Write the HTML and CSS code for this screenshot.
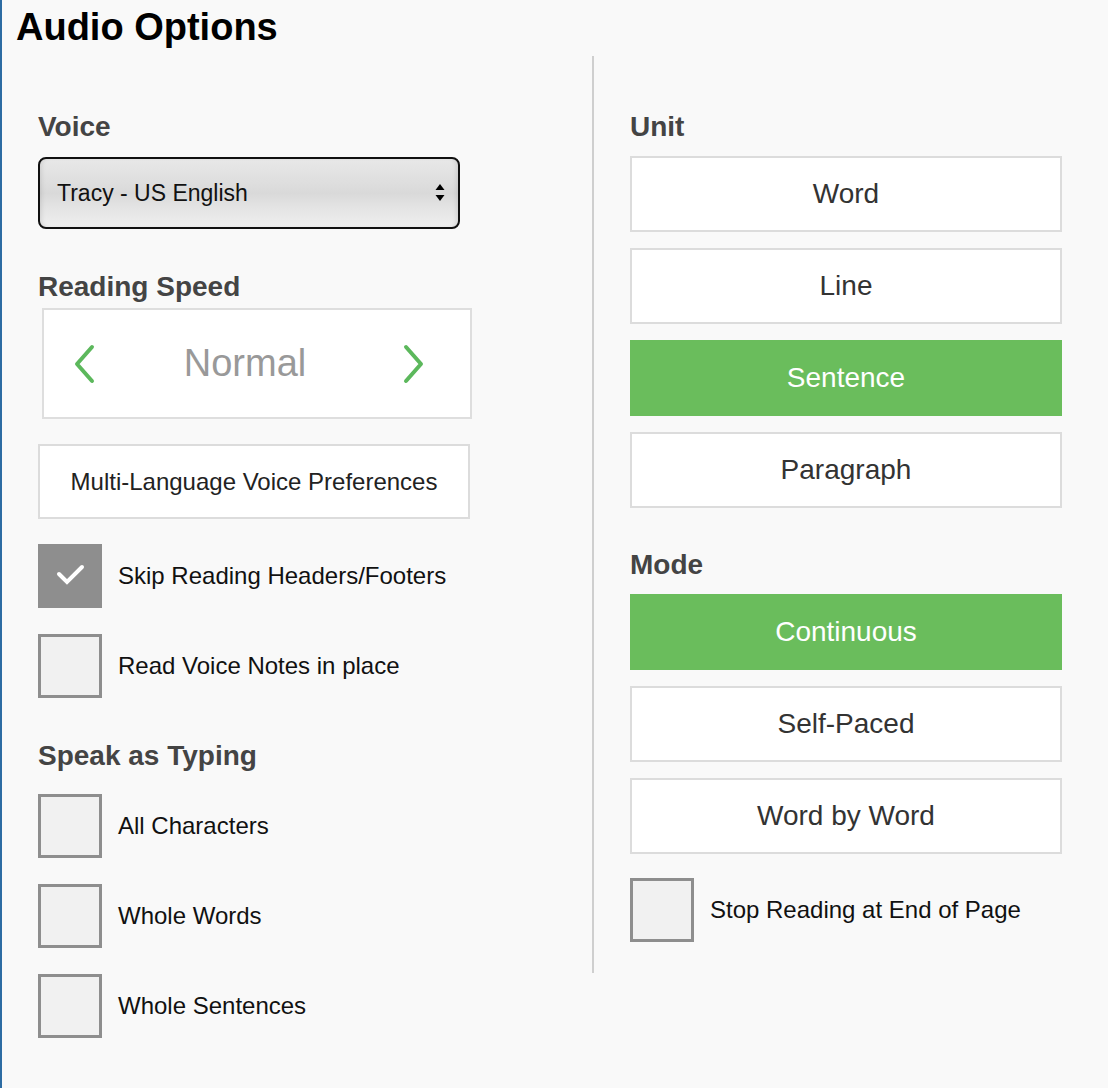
FILE: index.html
```html
<!DOCTYPE html>
<html lang="en">
<head>
<meta charset="utf-8">
<title>Audio Options</title>
<link rel="stylesheet" href="styles.css">
</head>
<body>
<div class="app">
  <h1 class="title">Audio Options</h1>
  <div class="columns">
    <div class="col-left">
      <div class="label">Voice</div>
      <div class="select">
        <span class="select-text">Tracy - US English</span>
        <svg class="select-arrows" width="12" height="22" viewBox="0 0 12 22">
          <polygon points="6,1 10.5,7 1.5,7" fill="#000"/>
          <polygon points="1.5,12 10.5,12 6,18" fill="#000"/>
        </svg>
      </div>

      <div class="label label-gap">Reading Speed</div>
      <div class="speed">
        <svg class="chev chev-left" width="24" height="42" viewBox="0 0 24 42">
          <polyline points="19,4 4,21 19,38" fill="none" stroke="#5cb85c" stroke-width="4" stroke-linecap="round" stroke-linejoin="round"/>
        </svg>
        <span class="speed-text">Normal</span>
        <svg class="chev chev-right" width="24" height="42" viewBox="0 0 24 42">
          <polyline points="5,4 20,21 5,38" fill="none" stroke="#5cb85c" stroke-width="4" stroke-linecap="round" stroke-linejoin="round"/>
        </svg>
      </div>

      <div class="btn btn-ml">Multi-Language Voice Preferences</div>

      <div class="check-list check-list-first">
        <div class="check-row">
          <span class="box box-on">
            <svg width="64" height="64" viewBox="0 0 64 64">
              <polyline points="21,30 29,38 44,23" fill="none" stroke="#fff" stroke-width="4" stroke-linecap="round" stroke-linejoin="miter"/>
            </svg>
          </span>
          <span class="check-label">Skip Reading Headers/Footers</span>
        </div>
        <div class="check-row">
          <span class="box"></span>
          <span class="check-label">Read Voice Notes in place</span>
        </div>
      </div>

      <div class="label label-gap">Speak as Typing</div>
      <div class="check-list check-list-typing">
        <div class="check-row">
          <span class="box"></span>
          <span class="check-label">All Characters</span>
        </div>
        <div class="check-row">
          <span class="box"></span>
          <span class="check-label">Whole Words</span>
        </div>
        <div class="check-row">
          <span class="box"></span>
          <span class="check-label">Whole Sentences</span>
        </div>
      </div>
    </div>

    <div class="col-right">
      <div class="label">Unit</div>
      <div class="btn-list">
        <div class="btn">Word</div>
        <div class="btn">Line</div>
        <div class="btn btn-active">Sentence</div>
        <div class="btn">Paragraph</div>
      </div>

      <div class="label label-gap-mode">Mode</div>
      <div class="btn-list">
        <div class="btn btn-active">Continuous</div>
        <div class="btn">Self-Paced</div>
        <div class="btn">Word by Word</div>
      </div>

      <div class="check-list check-list-stop">
        <div class="check-row">
          <span class="box"></span>
          <span class="check-label">Stop Reading at End of Page</span>
        </div>
      </div>
    </div>
  </div>
</div>
</body>
</html>
```

FILE: styles.css
```css
* {
  box-sizing: border-box;
}

html, body {
  margin: 0;
  padding: 0;
  background: #f9f9f9;
}

body {
  font-family: "Liberation Sans", Arial, Helvetica, sans-serif;
  color: #111;
}

.app {
  min-height: 1088px;
  border-left: 2px solid #2d6ca3;
  padding: 6px 0 0 14px;
}

.title {
  margin: 0;
  font-size: 38px;
  line-height: 42px;
  font-weight: bold;
  color: #000;
}

.columns {
  display: flex;
  align-items: flex-start;
  margin-top: 8px;
}

.col-left {
  width: 434px;
  margin-left: 22px;
  padding-top: 55px;
}

.col-right {
  width: 470px;
  margin-left: 120px;
  border-left: 2px solid #cfcfcf;
  padding: 55px 0 31px 36px;
}

.label {
  font-size: 28px;
  line-height: 32px;
  font-weight: bold;
  color: #444;
}

.label-gap {
  margin-top: 42px;
}

.label-gap-mode {
  margin-top: 41px;
}

/* select */
.select {
  margin-top: 14px;
  width: 422px;
  height: 72px;
  border: 2px solid #111;
  border-radius: 8px;
  background: linear-gradient(#e8e8e8 0%, #dedede 35%, #d9d9d9 50%, #e3e3e3 70%, #efefef 100%);
  box-shadow: inset 4px 0 5px -3px rgba(0,0,0,0.12), inset -4px 0 5px -3px rgba(0,0,0,0.12);
  display: flex;
  align-items: center;
  justify-content: space-between;
  padding: 0 12px 0 17px;
}

.select-text {
  font-size: 23px;
  color: #111;
}

.select-arrows {
  display: block;
  margin-top: 2px;
}

/* reading speed */
.speed {
  margin-top: 5px;
  margin-left: 4px;
  width: 430px;
  height: 111px;
  background: #fff;
  border: 2px solid #dedede;
  display: flex;
  align-items: center;
  padding: 0 0 0 29px;
}

.chev {
  display: block;
  flex: none;
}

.speed-text {
  font-size: 38px;
  color: #999;
  width: 304px;
  padding-right: 8px;
  text-align: center;
}

/* buttons */
.btn {
  height: 76px;
  width: 432px;
  background: #fff;
  border: 2px solid #dcdcdc;
  display: flex;
  align-items: center;
  justify-content: center;
  font-size: 28px;
  color: #333;
}

.btn-ml {
  margin-top: 25px;
  height: 75px;
  font-size: 24px;
  color: #222;
}

.btn-list {
  margin-top: 13px;
  display: flex;
  flex-direction: column;
  gap: 16px;
}

.btn-active {
  background: #6abd5c;
  border-color: #6abd5c;
  color: #fff;
}

/* checkboxes */
.check-list {
  display: flex;
  flex-direction: column;
  gap: 26px;
}

.check-list-first {
  margin-top: 25px;
}

.check-list-typing {
  margin-top: 22px;
}

.check-list-stop {
  margin-top: 24px;
}

.check-row {
  display: flex;
  align-items: center;
  gap: 16px;
}

.box {
  flex: none;
  width: 64px;
  height: 64px;
  border: 3px solid #8e8e8e;
  background: #f1f1f1;
  position: relative;
}

.box-on {
  background: #8e8e8e;
}

.box-on svg {
  position: absolute;
  left: -3px;
  top: -3px;
}

.check-label {
  font-size: 24px;
  color: #111;
}
```
